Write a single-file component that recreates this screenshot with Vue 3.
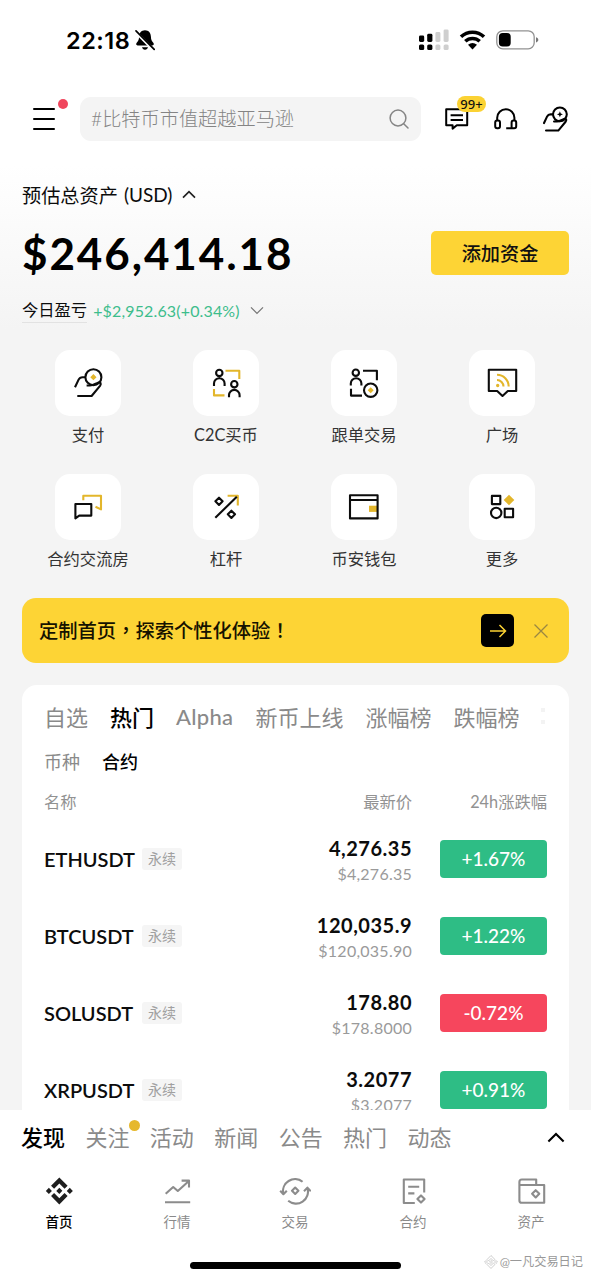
<script setup>
const Y = '#e3b62b'
const K = '#0c0c0c'

const handPath =
  'M20 37.3L23.6 29.6Q24.8 27.2 27.5 27.2H30M31.6 35.5H35C38.4 35.5 40.2 33.8 43.2 32.6C45.8 31.7 46.4 33.8 45 35.8L36.6 46H22.3'

const shortcuts = [
  {
    label: '支付',
    shapes: [
      { d: handPath, s: K },
      { d: 'M30.4 27.2a8 8 0 1 0 16 0a8 8 0 1 0-16 0', s: K },
      { d: 'M38.4 24.1l3.1 3.1-3.1 3.1-3.1-3.1z', f: Y }
    ]
  },
  {
    label: 'C2C买币',
    shapes: [
      { d: 'M23.1 22.9a3.2 3.2 0 1 0 6.4 0a3.2 3.2 0 1 0-6.4 0M21 35.9V33.6a5.3 5.3 0 0 1 10.6 0V35.9', s: K },
      { d: 'M38.1 34.2a3.2 3.2 0 1 0 6.4 0a3.2 3.2 0 1 0-6.4 0M36 47.2V45.2a5.3 5.3 0 0 1 10.6 0V47.2', s: K },
      { d: 'M32.5 20.8H46.3V29M21 39V45.4H31.5', s: Y }
    ]
  },
  {
    label: '跟单交易',
    shapes: [
      { d: 'M21.6 22.7a3.2 3.2 0 1 0 6.4 0a3.2 3.2 0 1 0-6.4 0M19.8 35.4V33.6a5.3 5.3 0 0 1 10.6 0V35.4', s: K },
      { d: 'M32 20.8H45.9V30.2M20 38.8V45.6H31', s: K },
      { d: 'M33 40.2a6.7 6.7 0 1 0 13.4 0a6.7 6.7 0 1 0-13.4 0', s: K },
      { d: 'M39.7 37.2l3 3-3 3-3-3z', f: Y }
    ]
  },
  {
    label: '广场',
    shapes: [
      { d: 'M19.8 19.8H47.2V41H38.8L33.5 46L28.2 41H19.8Z', s: K },
      { d: 'M28 30a6.5 6.5 0 0 1 6.5 6.5M28 24.8a11.7 11.7 0 0 1 11.7 11.7', s: Y },
      { d: 'M27 35.5a1.7 1.7 0 1 0 3.4 0a1.7 1.7 0 1 0-3.4 0', f: Y }
    ]
  },
  {
    label: '合约交流房',
    shapes: [
      { d: 'M28.3 26.3V21.8H46V35.4L40.5 32.8', s: Y },
      { d: 'M20.4 30H36.3V41.6H24.2L20.4 44.4Z', s: K }
    ]
  },
  {
    label: '杠杆',
    shapes: [
      { d: 'M34.6 21.8H44.8V31.5', s: Y },
      { d: 'M22.3 43.8L43.8 22.7M26 23.7l3.6 3.6-3.6 3.6-3.6-3.6zM38.4 36.7l3.6 3.6-3.6 3.6-3.6-3.6z', s: K }
    ]
  },
  {
    label: '币安钱包',
    shapes: [
      { d: 'M38 31.7h8v6.2h-8z', f: Y },
      { d: 'M19 21.2H46.6V44.4H19ZM19 26H46.6', s: K }
    ]
  },
  {
    label: '更多',
    shapes: [
      { d: 'M22.9 21.9h8.4v8.2h-8.4zM35.7 34.8h8.4v8.4h-8.4zM22 38.9a5.2 5.2 0 1 0 10.4 0a5.2 5.2 0 1 0-10.4 0', s: K },
      { d: 'M40 20.8l5.3 5.2-5.3 5.2-5.3-5.2z', f: Y }
    ]
  }
]

const marketTabs = ['自选', '热门', 'Alpha', '新币上线', '涨幅榜', '跌幅榜']

const rows = [
  { name: 'ETHUSDT', price: '4,276.35', usd: '$4,276.35', change: '+1.67%' },
  { name: 'BTCUSDT', price: '120,035.9', usd: '$120,035.90', change: '+1.22%' },
  { name: 'SOLUSDT', price: '178.80', usd: '$178.8000', change: '-0.72%' },
  { name: 'XRPUSDT', price: '3.2077', usd: '$3.2077', change: '+0.91%' }
]

const feedTabs = ['发现', '关注', '活动', '新闻', '公告', '热门', '动态']

const logo =
  'M16.624 13.9202l2.7175 2.7154-7.353 7.353-7.353-7.352 2.7175-2.7164 4.6355 4.6595 4.6356-4.6595zm4.6366-4.6366L24 12l-2.7154 2.7164L18.5682 12l2.6924-2.7164zm-9.272.001l2.7163 2.6914-2.7164 2.7174v-.001L9.2721 12l2.7164-2.7154zm-9.2722-.001L5.4088 12l-2.6914 2.6924L0 12l2.7164-2.7164zM11.9885.0115l7.353 7.329-2.7174 2.7154-4.6356-4.6356-4.6355 4.6595-2.7174-2.7154 7.353-7.353z'

const nav = [
  { label: '首页', logo: true },
  { label: '行情', d: 'M4.7 18.8L12.2 12L16.8 16L27.6 6.2M20.6 5.6H28V12.6M4 27.2H29.2' },
  {
    label: '交易',
    d: 'M4.4 19A12 12 0 0 1 23.6 6.8M1.2 15.8L4.4 19.2L7.8 15.8M9.2 25.8A12 12 0 0 0 28.4 13M25 16.2L28.4 12.6L31.8 16.2M16.2 12.6l3.2 3.2-3.2 3.2-3.2-3.2z'
  },
  {
    label: '合约',
    d: 'M27.2 17.6V4.5H6.8V28H17.8M11.2 11.8H22.2M11.2 18.4H17.4M24 20.4l3.6 3.6-3.6 3.6-3.6-3.6z'
  },
  {
    label: '资产',
    d: 'M29.2 10H4.4V25.4Q4.4 27.8 6.8 27.8H29.2ZM4.4 10V7Q4.4 4.5 6.9 4.5H21.2V10M20.7 15.2l3.6 3.6-3.6 3.6-3.6-3.6z'
  }
]
</script>

<template>
  <div class="phone">
    <div class="status">
      <span class="time">22:18</span>
      <svg class="bell" width="20" height="22" viewBox="0 0 20 22">
        <path d="M10 1.2c-3.8 0-5.8 2.8-5.9 6.2-.1 3.4-.9 4.6-2.4 6.4-1 1.2-.6 2.6.9 2.6h14.8c1.5 0 1.9-1.4.9-2.6-1.5-1.8-2.3-3-2.4-6.4C15.8 4 13.8 1.2 10 1.2zM7 18.2h6c-.4 1.6-1.4 2.5-3 2.5s-2.6-.9-3-2.5z" fill="#000" />
        <path d="M1 3.2L18.5 21" stroke="#fff" stroke-width="3" />
        <path d="M1 1.8L19.2 20.4" stroke="#000" stroke-width="1.7" stroke-linecap="round" />
      </svg>
      <svg class="signal" width="30" height="22" viewBox="0 0 30 22">
        <g fill="#000">
          <rect x="0" y="6.6" width="5.2" height="6.4" rx="1.4" /><rect x="8.2" y="4.8" width="5.2" height="8.2" rx="1.4" />
          <rect x="0" y="15.6" width="5.2" height="5.4" rx="1.5" /><rect x="8.2" y="15.6" width="5.2" height="5.4" rx="1.5" />
        </g>
        <g fill="#cfcfcf">
          <rect x="16.4" y="3" width="5" height="10" rx="1.4" /><rect x="24.6" y=".4" width="5" height="12.6" rx="1.4" />
          <rect x="16.4" y="15.6" width="5" height="5.4" rx="1.5" /><rect x="24.6" y="15.6" width="5" height="5.4" rx="1.5" />
        </g>
      </svg>
      <svg class="wifi" width="27" height="20" viewBox="0 0 27 20">
        <path d="M2 6.8A16.5 16.5 0 0 1 25 6.8M6.3 11.3A10.4 10.4 0 0 1 20.7 11.3" fill="none" stroke="#000" stroke-width="3.5" />
        <path d="M9 14.8Q13.5 11.2 18 14.8L13.5 19.4Z" fill="#000" />
      </svg>
      <svg class="battery" width="43" height="20" viewBox="0 0 43 20">
        <rect x=".8" y=".8" width="37.4" height="18" rx="6" fill="#fff" stroke="#929292" stroke-width="1.3" />
        <rect x="2.9" y="3" width="11.8" height="13.6" rx="3.8" fill="#000" />
        <path d="M40 7.2c1.6.5 2.3 1.3 2.3 2.6s-.7 2.1-2.3 2.6z" fill="#777" />
      </svg>
    </div>

    <div class="header">
      <div class="menu">
        <i></i><i></i><i></i>
        <b class="red-dot"></b>
      </div>
      <div class="search">
        <span>#比特币市值超越亚马逊</span>
        <svg width="20" height="20" viewBox="0 0 20 20" fill="none" stroke="#858585" stroke-width="1.5">
          <circle cx="9" cy="9" r="7.9" /><path d="M14.7 14.7L19 19" stroke-linecap="round" />
        </svg>
      </div>
      <div class="message">
        <svg width="24" height="22" viewBox="0 0 24 22" fill="none" stroke="#000" stroke-width="2">
          <path d="M1.2 1.2H22.2V17.2H11.8L7.6 20.6V17.2H1.2Z" stroke-linejoin="round" /><path d="M5.6 7.2H18M5.6 12H18" />
        </svg>
        <span class="count">99+</span>
      </div>
      <svg class="headset" width="24" height="22" viewBox="0 0 24 22" fill="none" stroke="#000" stroke-width="2">
        <path d="M3.2 12V9.8a8.6 8.6 0 0 1 17.2 0V12" />
        <rect x="1.2" y="12.6" width="4.8" height="7.6" rx="2" /><path d="M17.6 20.2V14.6q0-2 2-2h.6q2 0 2 2V18.2q0 2-2 2H12.2" />
      </svg>
      <svg class="hand" width="25" height="26" viewBox="18.8 17.6 29 30" fill="none" stroke="#000" stroke-width="2.4" stroke-linecap="round">
        <path :d="handPath" /><circle cx="38.4" cy="27.2" r="8" />
        <path d="M38.4 23.7l1 2.5 2.5 1-2.5 1-1 2.5-1-2.5-2.5-1 2.5-1z" fill="#000" stroke="none" />
      </svg>
    </div>

    <div class="assets">
      <div class="asset-title">
        <span>预估总资产</span><span class="unit">(USD)</span>
        <svg width="14" height="9" viewBox="0 0 14 9"><path d="M1 7.6L7 1.7L13 7.6" fill="none" stroke="#222" stroke-width="1.7" /></svg>
      </div>
      <div class="balance-row">
        <span class="balance">$246,414.18</span>
        <button class="deposit">添加资金</button>
      </div>
      <div class="pnl">
        <span class="pnl-label">今日盈亏</span><span class="pnl-value">+$2,952.63(+0.34%)</span>
        <svg width="14" height="9" viewBox="0 0 14 9"><path d="M1 1.4L7 7.4L13 1.4" fill="none" stroke="#777" stroke-width="1.3" /></svg>
      </div>
    </div>

    <div class="grid">
      <div v-for="item in shortcuts" :key="item.label" class="shortcut">
        <div class="tile">
          <svg width="66" height="66" viewBox="0 0 66 66" stroke-width="2.1" stroke-linejoin="round">
            <path v-for="(p, i) in item.shapes" :key="i" :d="p.d" :fill="p.f || 'none'" :stroke="p.s || 'none'" />
          </svg>
        </div>
        <span>{{ item.label }}</span>
      </div>
    </div>

    <div class="banner">
      <span class="banner-text">定制首页<em>，</em>探索个性化体验<em>！</em></span>
      <div class="go">
        <svg width="18" height="14" viewBox="0 0 18 14"><path d="M1 7H16.5M10.5 1L16.5 7L10.5 13" fill="none" stroke="#fbd233" stroke-width="1.5" /></svg>
      </div>
      <svg width="14" height="14" viewBox="0 0 14 14"><path d="M.5 .5L13.5 13.5M13.5 .5L.5 13.5" stroke="#9a8742" stroke-width="1.3" /></svg>
    </div>

    <div class="market">
      <div class="tabs">
        <span v-for="(t, i) in marketTabs" :key="t" :class="{ active: i === 1, latin: t === 'Alpha' }">{{ t }}</span>
        <i class="more-hint"></i>
      </div>
      <div class="subtabs"><span>币种</span><span class="active">合约</span></div>
      <div class="row head"><span>名称</span><span class="right">最新价</span><span class="right">24h涨跌幅</span></div>
      <div v-for="r in rows" :key="r.name" class="row">
        <div class="pair"><span class="symbol">{{ r.name }}</span><span class="tag">永续</span></div>
        <div class="prices"><span class="price">{{ r.price }}</span><span class="usd">{{ r.usd }}</span></div>
        <div class="change" :class="{ down: r.change[0] === '-' }">{{ r.change }}</div>
      </div>
    </div>

    <div class="bottom">
      <div class="feed">
        <span v-for="(t, i) in feedTabs" :key="t" :class="{ active: i === 0 }">{{ t }}<b v-if="i === 1" class="dot"></b></span>
        <svg width="18" height="11" viewBox="0 0 18 11"><path d="M1.4 9.4L9 2L16.6 9.4" fill="none" stroke="#000" stroke-width="2.1" /></svg>
      </div>
      <div class="nav">
        <div v-for="n in nav" :key="n.label" class="nav-item">
          <svg v-if="n.logo" width="32" height="32" viewBox="-2.5 -2.1 28.4 28.4"><path :d="logo" fill="#1f1f1f" /></svg>
          <svg v-else width="32" height="32" viewBox="0 0 32 32"><path :d="n.d" fill="none" stroke="#8c8c8c" stroke-width="2.1" stroke-linejoin="round" /></svg>
          <span :class="{ active: n.logo }">{{ n.label }}</span>
        </div>
      </div>
      <div class="home-bar"></div>
      <div class="author">
        <svg width="14" height="14" viewBox="-1 -1 26 26"><path :d="logo" fill="#fff" stroke="#bdbdbd" stroke-width="1.4" /></svg>
        <span>@一凡交易日记</span>
      </div>
    </div>
  </div>
</template>

<style>
html,
body {
  margin: 0;
  background: #fff;
}
</style>

<style scoped>
.phone {
  width: 591px;
  height: 1280px;
  overflow: hidden;
  position: relative;
  display: flex;
  flex-direction: column;
  background: linear-gradient(#fff 0, #fff 165px, #f4f4f4 330px, #f4f4f4 100%);
  font-family: Lato, "Noto Sans CJK SC", sans-serif;
  color: #0c0c0c;
  white-space: nowrap;
}
svg {
  display: block;
  flex: none;
}
span {
  display: block;
}
.status {
  height: 80px;
  flex: none;
  display: flex;
  align-items: center;
  padding-left: 66px;
}
.time {
  width: 69px;
  padding-top: 2px;
  font: 600 23.5px/30px Inter, sans-serif;
  letter-spacing: 0.5px;
  color: #000;
}
.signal {
  margin-left: 264px;
}
.wifi,
.battery {
  margin-left: 10px;
}
.header {
  height: 77px;
  flex: none;
  display: flex;
  align-items: center;
  padding-left: 33px;
}
.menu {
  width: 22px;
  height: 22px;
  position: relative;
  display: flex;
  flex-direction: column;
  justify-content: space-between;
}
.menu i {
  height: 2px;
  border-radius: 1px;
  background: #000;
}
.red-dot {
  position: absolute;
  left: 25px;
  top: -9px;
  width: 10px;
  height: 10px;
  border-radius: 50%;
  background: #f0465d;
}
.search {
  width: 341px;
  height: 44px;
  margin-left: 25px;
  padding: 0 12px 0 11px;
  box-sizing: border-box;
  border-radius: 11px;
  background: #f4f4f4;
  display: flex;
  align-items: center;
  justify-content: space-between;
  color: #848484;
  font-size: 19.2px;
  font-weight: 300;
}
.search span {
  padding-bottom: 2px;
}
.message {
  position: relative;
  margin-left: 24px;
}
.count {
  position: absolute;
  left: 12px;
  top: -12px;
  width: 29px;
  height: 16px;
  border-radius: 8px;
  background: #fbd233;
  text-align: center;
  font: 500 13px/16px "Noto Sans", sans-serif;
  color: #111;
}
.headset,
.hand {
  margin-left: 25px;
}
.assets {
  height: 193px;
  flex: none;
  box-sizing: border-box;
  padding: 23px 22px 0;
}
.asset-title {
  height: 29px;
  display: flex;
  align-items: center;
  font-size: 19.2px;
}
.unit {
  margin: 0 10px 0 6px;
  font-size: 19px;
}
.balance-row {
  height: 87px;
  display: flex;
  align-items: center;
  justify-content: space-between;
}
.balance {
  font-size: 44px;
  line-height: 56px;
  font-weight: 700;
  letter-spacing: 1.9px;
  color: #000;
}
.deposit {
  width: 138px;
  height: 44px;
  margin-top: 1px;
  border: 0;
  padding: 0;
  border-radius: 5px;
  background: #fdd435;
  color: #111;
  font: 500 19.2px/42px "Noto Sans CJK SC", sans-serif;
}
.pnl {
  height: 28px;
  display: flex;
  align-items: center;
}
.pnl-label {
  font-size: 16.3px;
  line-height: 24px;
  border-bottom: 1px solid #e2e2e2;
}
.pnl-value {
  margin: 0 10px 0 6px;
  font-size: 16px;
  letter-spacing: 0.15px;
  color: #3dbd8c;
}
.grid {
  flex: none;
  display: grid;
  grid-template-columns: repeat(4, 138px);
  grid-auto-rows: 124px;
  padding-left: 19px;
}
.shortcut {
  display: flex;
  flex-direction: column;
  align-items: center;
  font-size: 16.3px;
  line-height: 24px;
  color: #333;
}
.shortcut span {
  margin-top: 7px;
}
.tile {
  width: 66px;
  height: 66px;
  border-radius: 15px;
  background: #fff;
}
.banner {
  flex: none;
  height: 65px;
  margin: 0 22px;
  box-sizing: border-box;
  padding: 0 21px 0 17px;
  border-radius: 14px;
  background: #fdd435;
  display: flex;
  align-items: center;
}
.banner-text {
  flex: 1;
  padding-bottom: 2px;
  font-size: 19.3px;
  font-weight: 500;
  color: #151200;
}
.banner-text em {
  font-style: normal;
  font-family: "Noto Sans CJK TC", sans-serif;
}
.go {
  width: 33px;
  height: 33px;
  margin-right: 20px;
  border-radius: 5px;
  background: #000;
  display: flex;
  align-items: center;
  justify-content: center;
}
.market {
  flex: none;
  margin: 22px 22px 0;
  height: 600px;
  border-radius: 15px;
  background: #fff;
  padding: 9px 22px 0;
}
.tabs {
  height: 44px;
  display: flex;
  align-items: center;
  gap: 22px;
  font-size: 22px;
  color: #8a8a8a;
}
.tabs .latin {
  font-weight: 500;
  letter-spacing: 0.3px;
}
.more-hint {
  width: 4px;
  height: 16px;
  border: solid #f3f3f3;
  border-width: 4px 0;
  box-sizing: border-box;
}
.active,
.tabs .active {
  color: #000;
  font-weight: 500;
}
.subtabs {
  height: 45px;
  display: flex;
  align-items: center;
  gap: 22px;
  font-size: 18px;
  color: #8a8a8a;
}
.row {
  height: 77px;
  display: grid;
  grid-template-columns: 1fr 128px 107px;
  column-gap: 28px;
  align-items: center;
}
.row.head {
  height: 35px;
  margin-bottom: 2px;
  font-size: 16.3px;
  color: #929292;
}
.right {
  text-align: right;
}
.pair {
  display: flex;
  align-items: center;
  gap: 7px;
}
.symbol {
  width: 91px;
  font-size: 20px;
  font-weight: 600;
}
.tag {
  height: 22px;
  padding: 0 6px;
  border-radius: 3px;
  background: #f5f5f5;
  font-size: 14px;
  line-height: 22px;
  color: #a0a0a0;
}
.prices {
  padding-top: 3px;
  text-align: right;
}
.price {
  font-size: 20px;
  line-height: 26px;
  font-weight: 700;
  letter-spacing: 0.5px;
}
.usd {
  font-size: 16px;
  line-height: 25px;
  color: #9a9a9a;
  letter-spacing: 0.25px;
}
.change {
  height: 38px;
  border-radius: 4px;
  background: #2ebd85;
  color: #fff;
  font-size: 19px;
  line-height: 38px;
  font-weight: 500;
  text-align: center;
}
.change.down {
  background: #f6465d;
}
.bottom {
  position: absolute;
  left: 0;
  right: 0;
  bottom: 0;
  height: 170px;
  background: #fff;
}
.feed {
  height: 52px;
  padding: 0 26px 2px 21px;
  display: flex;
  align-items: center;
  gap: 20.4px;
  font-size: 22px;
  color: #8a8a8a;
}
.feed span {
  position: relative;
}
.feed svg {
  margin: 2px 0 0 auto;
}
.dot {
  position: absolute;
  right: -11px;
  top: 0;
  width: 11px;
  height: 11px;
  border-radius: 50%;
  background: #e6b82c;
}
.nav {
  display: flex;
  padding-top: 11px;
}
.nav-item {
  width: 118px;
  display: flex;
  flex-direction: column;
  align-items: center;
  font-size: 13.5px;
  line-height: 20px;
  color: #8a8a8a;
}
.nav-item span {
  margin-top: 5px;
}
.home-bar {
  width: 211px;
  height: 7px;
  border-radius: 4px;
  margin: 30px 0 0 190px;
  background: #000;
}
.author {
  display: flex;
  align-items: center;
  justify-content: flex-end;
  gap: 2px;
  margin-top: -17px;
  padding-right: 8px;
  font-size: 12.2px;
  line-height: 20px;
  color: #999;
}
</style>
